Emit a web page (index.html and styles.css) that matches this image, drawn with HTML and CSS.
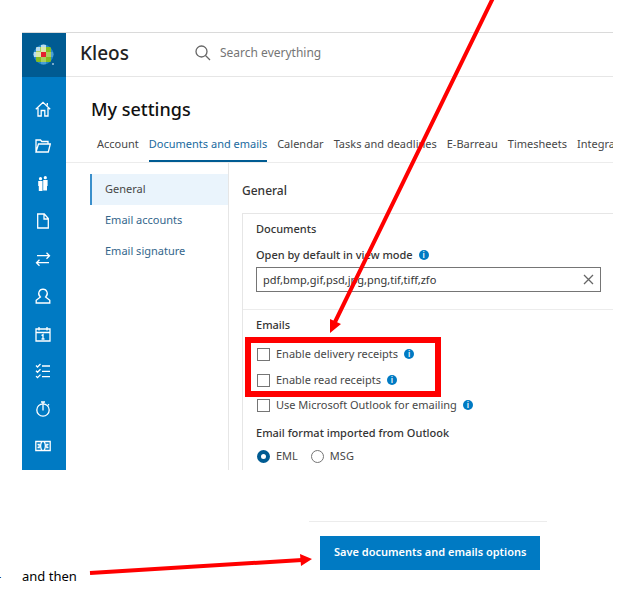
FILE: index.html
```html
<!DOCTYPE html>
<html lang="en">
<head>
<meta charset="utf-8">
<title>Kleos – My settings</title>
<link rel="stylesheet" href="styles.css">
</head>
<body>
<div class="app">
  <nav class="rail">
    <a class="logo" href="#">
      <svg width="22" height="22" viewBox="0 0 22 22">
        <defs><clipPath id="globe"><circle cx="10.500" cy="10.500" r="10"/></clipPath></defs>
        <g clip-path="url(#globe)">
          <path fill="#2287c9" d="M0 0h21v21H0z"/>
          <path fill="#85bc20" d="M3 3h15v15H3z"/>
          <path fill="#a9cf5c" d="M3 3h5v5H3zM13 8h5v5h-5z"/>
          <path fill="#b9dcef" d="M8 0h5v4H8zM0 8h4v5H0zM3 3h4v4H3z"/>
          <path fill="#d9e9ae" d="M8 3h5v5H8zM3 8h5v5H3z"/>
          <path fill="#a9cf5c" d="M8 13h5v5H8z"/>
          <path fill="#e5202e" d="M8 8h5v5H8z"/>
          <path fill="#4a9fd6" d="M8 18h5v3H8zM18 8h3v5h-3z"/>
        </g>
        <circle cx="20" cy="20" r="1" fill="#9fc3dc"/>
      </svg>
    </a>
    <a href="#"><svg viewBox="0 0 16 16"><path d="M.8 8.200 8 1.300l7.200 6.900M3 7v8h3.200V9.500h3.600V15H13V7M12.300 4.500V2"/></svg></a>
    <a href="#"><svg viewBox="0 0 16 16"><path d="M1 14V2h4.500l1.300 1.500H13V6M1 14 3.500 6H15.300L13.300 14z"/></svg></a>
    <a href="#"><svg viewBox="0 0 16 16"><g class="solid"><circle cx="5.500" cy="2.700" r="1.600"/><circle cx="10.300" cy="1.700" r="1.600"/><path d="M3.200 5h4.300v10H3.800V10h-.6zM8.200 4h4.400v6H12v4.500H8.200z"/></g></svg></a>
    <a href="#"><svg viewBox="0 0 16 16"><path d="M2.700 1h6.600l4 4.500V15H2.700zM9 1v5h4.300"/></svg></a>
    <a href="#"><svg viewBox="0 0 16 16"><path d="M2 4.700h12.500M11.500 1.700l3 3-3 3M14 11.700H1.500M4.500 8.700l-3 3 3 3"/></svg></a>
    <a href="#"><svg viewBox="0 0 16 16"><path d="M8 1.200a4.300 4.300 0 0 0-2.600 7.700L1.200 12.200V15h13.600v-2.800l-4.200-3.300A4.300 4.300 0 0 0 8 1.200z"/></svg></a>
    <a href="#"><svg viewBox="0 0 16 16"><path d="M1 3h14v12H1zM1 6.500h14M4 1v3.500M12 1v3.500M6.500 9.500 8 8.700V13M6.500 13h3"/></svg></a>
    <a href="#"><svg viewBox="0 0 16 16"><path d="M7 3h8M7 8.300h8M7 13.600h8M1 2.500l1.500 1.500L5.500 1M1 7.800l1.500 1.500 3-3M1 13.100l1.500 1.500 3-3"/></svg></a>
    <a href="#"><svg viewBox="0 0 16 16"><circle cx="8" cy="9" r="6.200"/><path d="M8 9.500V1.200M6 1h4M13 4.200l1-1"/></svg></a>
    <a href="#"><svg viewBox="0 0 16 16"><path d="M.8 3.500h14.400v9H.8zM2.500 6.500h1.700v3H2.500M13.500 6.500h-1.700v3h1.700M6.800 3.500c-1.300 2.500-1.300 6.500 0 9M9.200 3.500c1.300 2.500 1.300 6.500 0 9"/></svg></a>
  </nav>
  <div class="main">
    <header class="topbar">
      <span class="brand">Kleos</span>
      <label class="search">
        <svg width="16" height="16" viewBox="0 0 16 16"><circle cx="6.500" cy="6.500" r="5.500"/><path d="m10.500 10.500 4.500 4.500"/></svg>
        <input type="search" placeholder="Search everything" aria-label="Search everything">
      </label>
    </header>
    <h1>My settings</h1>
    <nav class="tabs">
      <a href="#">Account</a>
      <a href="#" class="current">Documents and emails</a>
      <a href="#">Calendar</a>
      <a href="#">Tasks and deadlines</a>
      <a href="#">E-Barreau</a>
      <a href="#">Timesheets</a>
      <a href="#">Integrations</a>
    </nav>
    <div class="body">
      <nav class="subnav">
        <a href="#" class="current">General</a>
        <a href="#">Email accounts</a>
        <a href="#">Email signature</a>
      </nav>
      <main class="panel">
        <h2>General</h2>
        <div class="card">
          <section class="documents">
            <h3>Documents</h3>
            <label class="heading" for="types">Open by default in view mode <span class="info">i</span></label>
            <div class="field">
              <input id="types" type="text" value="pdf,bmp,gif,psd,jpg,png,tif,tiff,zfo">
              <button type="button" aria-label="Clear"><svg width="11" height="11" viewBox="0 0 11 11"><path d="m1 1 9 9M10 1l-9 9"/></svg></button>
            </div>
          </section>
          <section class="emails">
            <h3>Emails</h3>
            <div class="receipts">
              <label class="option"><input type="checkbox">Enable delivery receipts <span class="info">i</span></label>
              <label class="option"><input type="checkbox">Enable read receipts <span class="info">i</span></label>
            </div>
            <label class="option"><input type="checkbox">Use Microsoft Outlook for emailing <span class="info">i</span></label>
            <h3 class="format">Email format imported from Outlook</h3>
            <div class="radios">
              <label class="option"><input type="radio" name="format" checked>EML</label>
              <label class="option"><input type="radio" name="format">MSG</label>
            </div>
          </section>
        </div>
      </main>
    </div>
  </div>
</div>
<div class="step">
  <p><span class="dash">-</span>and then</p>
  <div class="save"><button type="button">Save documents and emails options</button></div>
</div>
<svg class="arrows" width="638" height="603" viewBox="0 0 638 603">
  <path class="line" d="M493-2 335 322M90 573l212-13"/>
  <path class="head" d="m330 333 0-14 11 5zM312 559l-12-5 1 12z"/>
</svg>
</body>
</html>
```
FILE: styles.css
```css
* { box-sizing: border-box; }

body {
  margin: 0;
  padding: 32px 25px 0 22px;
  position: relative;
  overflow: hidden;
  background: #fff;
  color: #353535;
  font: 11px/16px "Noto Sans", "Open Sans", sans-serif;
}

a { color: inherit; text-decoration: none; }
h1, h2, h3, p { margin: 0; }
input, button { font: inherit; color: inherit; }

.app {
  display: flex;
  border-top: 1px solid #dadada;
}

.rail {
  flex: 0 0 44px;
  display: flex;
  flex-direction: column;
  background: #007ac3;
}
.rail a {
  height: 38px;
  padding-right: 3px;
  display: grid;
  place-items: center;
}
.rail a:nth-child(4n) { height: 37px; }
.rail a:nth-child(4n + 2) { height: 37px; }
.rail .logo {
  height: 44px;
  margin-bottom: 13px;
  padding: 0;
  background: #005b92;
}
.rail a:not(.logo) svg {
  width: 16px;
  height: 16px;
  fill: none;
  stroke: #fff;
  stroke-width: 1.3;
}
.rail .solid { fill: #fff; stroke: none; }

.main { flex: 1; min-width: 0; display: flex; flex-direction: column; }

.topbar {
  display: flex;
  align-items: center;
  height: 44px;
  padding: 0 14px 3px;
  border-bottom: 1px solid #e6e6e6;
}
.brand {
  flex: 0 0 115px;
  font-size: 19px;
  font-weight: 500;
  color: #232323;
}
.search { flex: 1; display: flex; align-items: center; gap: 9px; }
.search svg, .field svg { fill: none; stroke: #666; stroke-width: 1.3; }
.search input {
  flex: 1;
  min-width: 0;
  border: 0;
  padding: 0;
  outline: 0;
  background: none;
  font-size: 12px;
  appearance: none;
}
.search input::placeholder { color: #757575; opacity: 1; }

h1 {
  padding: 20px 25px 12px;
  font-size: 18px;
  line-height: 24px;
  font-weight: 500;
  color: #111;
}

.tabs {
  display: flex;
  gap: 10px;
  height: 30px;
  padding-left: 31px;
  overflow: hidden;
  white-space: nowrap;
  border-bottom: 1px solid #ececec;
}
.tabs a { padding-top: 3px; color: #474747; }
.tabs .current { color: #206a9e; border-bottom: 2px solid #005b92; }

.body { flex: 1; display: flex; }
.subnav {
  flex: 0 0 163px;
  padding: 11px 0 0 24px;
  border-right: 1px solid #e6e6e6;
}
.subnav a {
  display: block;
  padding: 7px 13px 8px;
  border-left: 2px solid transparent;
  color: #34668c;
}
.subnav .current {
  background: #eaf4fc;
  border-color: #3a8fcb;
  color: #474747;
}

.panel { flex: 1; min-width: 0; padding: 18px 0 0 13px; }
h2 { font-size: 12px; line-height: 20px; font-weight: 500; }
h3, .heading { font-size: 11px; line-height: 16px; font-weight: 500; }
.card {
  margin-top: 12px;
  border: 1px solid #e6e6e6;
  border-width: 1px 0 0 1px;
}
.documents { padding: 7px 12px 17px 13px; border-bottom: 1px solid #ececec; }
.heading { display: flex; align-items: center; gap: 6px; margin: 10px 0 4px; }
.info {
  flex: none;
  width: 10px;
  height: 10px;
  border-radius: 50%;
  background: #007ac3;
  color: #fff;
  font-size: 8px;
  line-height: 10px;
  font-weight: 600;
  text-align: center;
}
.field {
  display: flex;
  align-items: center;
  height: 25px;
  border: 1px solid #757575;
}
.field input {
  flex: 1;
  min-width: 0;
  padding: 0 6px;
  border: 0;
  outline: 0;
  background: none;
}
.field button {
  display: grid;
  place-items: center;
  width: 24px;
  padding: 0;
  border: 0;
  background: none;
}

.emails { padding: 7px 12px 6px 13px; }
.option { display: flex; align-items: center; gap: 6px; color: #474747; }
.option input {
  appearance: none;
  flex: none;
  width: 13px;
  height: 13px;
  margin: 0;
  border: 1px solid #757575;
  background: #fff;
}
.option input[type="radio"] { border-radius: 50%; }
.option input[type="radio"]:checked { border: 4px solid #005b92; }
.receipts {
  display: flex;
  flex-direction: column;
  gap: 10px;
  width: 196px;
  margin: 4px 0 0 -11px;
  padding: 3px 6px;
  border: 6px solid #f00;
}
.emails > .option { margin-left: 1px; }
.format { margin: 12px 0 7px; }
.radios { display: flex; gap: 13px; padding-left: 1px; }

.step { display: flex; padding-top: 51px; }
.step p {
  flex: 0 0 287px;
  padding-top: 45px;
  color: #000;
  font-size: 13px;
  line-height: 20px;
}
.dash { display: inline-block; width: 25px; margin-left: -25px; }
.save { padding: 14px 7px 0 11px; border-top: 1px solid #ececec; }
.save button {
  height: 34px;
  padding: 0 14px 2px;
  border: 0;
  background: #007ac3;
  color: #fff;
  font-weight: 600;
  white-space: nowrap;
}

/* Annotation arrows drawn over the page */
.arrows { position: absolute; left: 0; top: 0; pointer-events: none; }
.line { fill: none; stroke: #f00; stroke-width: 4; }
.head { fill: #f00; }
```
